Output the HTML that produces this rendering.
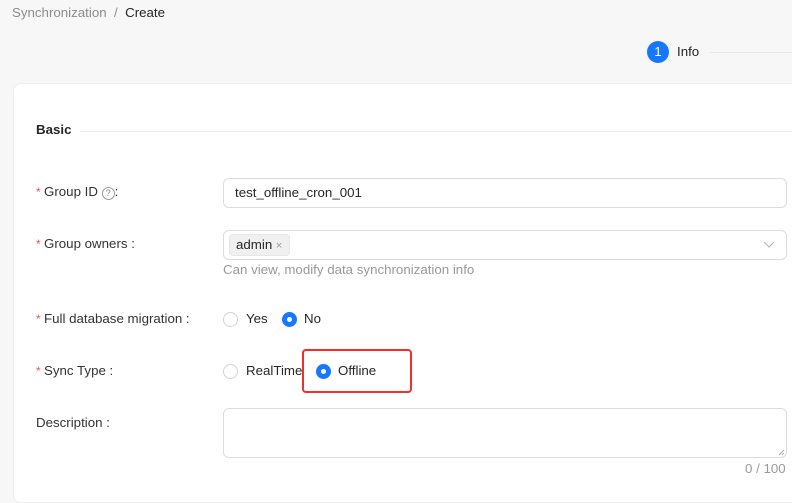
<!DOCTYPE html>
<html><head><style>
*{margin:0;padding:0;box-sizing:border-box}
body{width:792px;height:479px;background:#f7f7f7;font-family:"Liberation Sans",sans-serif;font-size:13.3px;color:#262626;position:relative;overflow:hidden}
.a{position:absolute;white-space:nowrap;line-height:16px}
.card{position:absolute;left:13px;top:83px;width:800px;height:420px;background:#fff;border-radius:8px;border:1px solid #eee}
.inp{position:absolute;background:#fff;border:1px solid #dcdcdc;border-radius:6px}
.st{color:#ff4d4f;font-size:12px}
.r{position:absolute;width:15px;height:15px;border-radius:50%;border:1px solid #d2d2d2;background:#fff}
.rc{position:absolute;width:15px;height:15px;border-radius:50%;background:#1677ff}
.rc:after{content:"";position:absolute;left:5px;top:5px;width:5px;height:5px;border-radius:50%;background:#fff}
.lbl{color:#333}
</style></head><body>
<div class="a" style="left:12px;top:5px;color:#8c8c8c">Synchronization&nbsp; / &nbsp;<span style="color:#262626">Create</span></div>
<div style="position:absolute;left:647px;top:41px;width:22px;height:22px;border-radius:50%;background:#1677ff;color:#fff;font-size:13px;text-align:center;line-height:22px">1</div>
<div class="a" style="left:677px;top:44px">Info</div>
<div style="position:absolute;left:710px;top:52px;width:82px;height:1px;background:#e6e6e6"></div>
<div class="card"></div>
<div class="a" style="left:36px;top:122px;font-weight:bold">Basic</div>
<div style="position:absolute;left:81px;top:131px;width:711px;height:1px;background:#ececec"></div>

<div class="a lbl" style="left:36px;top:184px"><span class="st">* </span>Group ID <span style="display:inline-block;width:13px;height:13px;border:1px solid #999;border-radius:50%;font-size:9px;text-align:center;line-height:11px;color:#888;vertical-align:0px">?</span>:</div>
<div class="inp" style="left:223px;top:178px;width:564px;height:30px"></div>
<div class="a" style="left:235px;top:185px">test_offline_cron_001</div>

<div class="a lbl" style="left:36px;top:236px"><span class="st">* </span>Group owners :</div>
<div class="inp" style="left:223px;top:230px;width:564px;height:30px"></div>
<div style="position:absolute;left:229px;top:234px;width:61px;height:22px;background:#f0f0f0;border-radius:4px;border:1px solid #e6e6e6"></div>
<div class="a" style="left:236px;top:237px">admin <span style="color:#999;font-size:11px">×</span></div>
<svg style="position:absolute;left:763px;top:239px" width="12" height="10"><path d="M1 3l5 5 5-5" stroke="#bbb" fill="none" stroke-width="1.2"/></svg>
<div class="a" style="left:223px;top:262px;color:#999">Can view, modify data synchronization info</div>

<div class="a lbl" style="left:36px;top:311px"><span class="st">* </span>Full database migration :</div>
<div class="r" style="left:223px;top:312px"></div>
<div class="a" style="left:246px;top:311px">Yes</div>
<div class="rc" style="left:282px;top:312px"></div>
<div class="a" style="left:304px;top:311px">No</div>

<div class="a lbl" style="left:36px;top:363px"><span class="st">* </span>Sync Type :</div>
<div class="r" style="left:223px;top:364px"></div>
<div class="a" style="left:246px;top:363px">RealTime</div>
<div style="position:absolute;left:302px;top:349px;width:110px;height:44px;border:2px solid #f0302a;border-radius:4px"></div>
<div class="rc" style="left:316px;top:364px"></div>
<div class="a" style="left:338px;top:363px">Offline</div>

<div class="a lbl" style="left:36px;top:415px">Description :</div>
<div class="inp" style="left:223px;top:408px;width:564px;height:50px"></div>
<svg style="position:absolute;left:778px;top:449px" width="7" height="7"><path d="M1 6L6 1M4 6L6 4" stroke="#aaa" stroke-width="1"/></svg>
<div class="a" style="left:745px;top:461px;color:#999">0 / 100</div>
</body></html>
